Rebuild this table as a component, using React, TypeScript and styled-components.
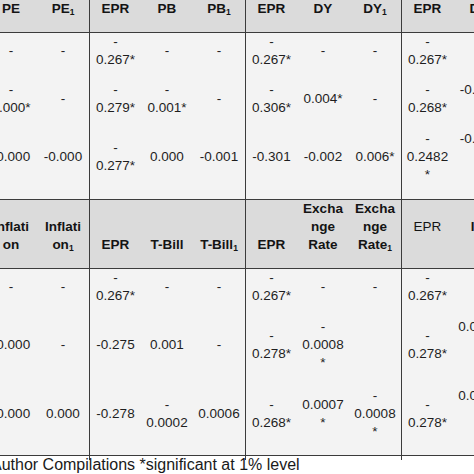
import React from "react";
import styled, { createGlobalStyle } from "styled-components";

const GlobalStyle = createGlobalStyle`
    html, body {
        margin: 0;
        padding: 0;
        background: #ffffff;
    }
    body {
        font-family: "Liberation Sans", Arial, sans-serif;
        color: #1e1e1e;
    }
`;

const RULE = "1px solid #3b3b3b";

const Page = styled.div`
    width: 474px;
    height: 474px;
    overflow: hidden;
`;

const Table = styled.div`
    width: 572px;
    margin-left: -15px;
    font-size: 13.5px;
    line-height: 18px;
`;

const HeadRow = styled.div<{$height: number}>`
    display: grid;
    grid-template-columns: repeat(11, 52px);
    height: ${(p) => p.$height}px;
    box-sizing: border-box;
    background: #dbdbdb;
    border-bottom: ${RULE};
    font-weight: 700;
    color: #141414;
`;

const BodyRow = styled.div<{$height: number; $last?: boolean}>`
    display: grid;
    grid-template-columns: repeat(11, 52px);
    height: ${(p) => p.$height}px;
    box-sizing: border-box;
    background: #f3f3f3;
    border-bottom: ${(p) => (p.$last ? RULE : "none")};
`;

const Cell = styled.div<{$start: boolean; $bottom: boolean; $pad: number; $plain?: boolean}>`
    display: flex;
    flex-direction: column;
    align-items: center;
    justify-content: ${(p) => (p.$bottom ? "flex-end" : "center")};
    box-sizing: border-box;
    padding-bottom: ${(p) => p.$pad}px;
    border-left: ${(p) => (p.$start ? RULE : "none")};
    font-weight: ${(p) => (p.$plain ? 400 : "inherit")};
    text-align: center;
    white-space: nowrap;
`;

const Line = styled.span`
    display: block;
    height: 18px;
`;

const Sub = styled.sub`
    font-size: 8.5px;
    line-height: 0;
    vertical-align: -2px;
`;

const Caption = styled.p`
    margin: 0 0 0 -9px;
    font-size: 16px;
    line-height: 18px;
    white-space: nowrap;
    color: #1a1a1a;
`;

type CellData = string[] | {lines: string[]; plain?: boolean; middle?: boolean};

const GROUP_STARTS = [2, 5, 8];

const head1: CellData[] = [
    ["PE"], ["PE_1"],
    ["EPR"], ["PB"], ["PB_1"],
    ["EPR"], ["DY"], ["DY_1"],
    ["EPR"], ["DP"], ["DP_1"],
];

const body1: {height: number; pad: number; cells: CellData[]}[] = [
    {
        height: 35,
        pad: 0,
        cells: [["-"], ["-"], ["-", "0.267*"], ["-"], ["-"], ["-", "0.267*"], ["-"], ["-"], ["-", "0.267*"], ["-"], ["-"]],
    },
    {
        height: 62,
        pad: 0,
        cells: [["-", "0.000*"], ["-"], ["-", "0.279*"], ["-", "0.001*"], ["-"], ["-", "0.306*"], ["0.004*"], ["-"], ["-", "0.268*"], ["-0.004", "*"], ["-"]],
    },
    {
        height: 70,
        pad: 16,
        cells: [["-0.000"], ["-0.000"], ["-", "0.277*"], ["0.000"], ["-0.001"], ["-0.301"], ["-0.002"], ["0.006*"], ["-", "0.2482", "*"], ["-0.003", "2", "*"], ["0.001"]],
    },
];

const head2: CellData[] = [
    ["Inflati", "on"], ["Inflati", "on_1"],
    ["EPR"], ["T-Bill"], ["T-Bill_1"],
    ["EPR"], ["Excha", "nge", "Rate"], ["Excha", "nge", "Rate_1"],
    {lines: ["EPR"], plain: true, middle: true}, {lines: ["IIP"], middle: true}, {lines: ["IIP_1"], middle: true},
];

const body2: {height: number; pad: number; cells: CellData[]}[] = [
    {
        height: 34,
        pad: 0,
        cells: [["-"], ["-"], ["-", "0.267*"], ["-"], ["-"], ["-", "0.267*"], ["-"], ["-"], ["-", "0.267*"], ["-"], ["-"]],
    },
    {
        height: 84,
        pad: 0,
        cells: [["-0.000"], ["-"], ["-0.275"], ["0.001"], ["-"], ["-", "0.278*"], ["-", "0.0008", "*"], [], ["-", "0.278*"], ["0.0004", "*", ""], ["-"]],
    },
    {
        height: 69,
        pad: 19,
        cells: [["-0.000"], ["0.000"], ["-0.278"], ["-", "0.0002"], ["0.0006"], ["-", "0.268*"], ["0.0007", "*"], ["-", "0.0008", "*"], ["-", "0.278*"], ["0.0005", "*", ""], ["-"]],
    },
];

function Text({value}: {value: string}) {
    const [main, sub] = value.split("_");
    return (
        <Line>
            {main}
            {sub && <Sub>{sub}</Sub>}
        </Line>
    );
}

function renderCells(cells: CellData[], header: boolean, pad: number) {
    return cells.map((c, i) => {
        const data = Array.isArray(c) ? {lines: c} : c;
        const middle = "middle" in data && data.middle;
        const plain = "plain" in data && data.plain;
        return (
            <Cell
                key={i}
                $start={GROUP_STARTS.includes(i)}
                $bottom={header && !middle}
                $pad={pad}
                $plain={plain}
            >
                {data.lines.map((l, j) => (
                    <Text key={j} value={l} />
                ))}
            </Cell>
        );
    });
}

export default function App() {
    return (
        <Page>
            <GlobalStyle />
            <Table>
                <HeadRow $height={33}>{renderCells(head1, true, 15)}</HeadRow>
                {body1.map((r, i) => (
                    <BodyRow key={i} $height={r.height} $last={i === body1.length - 1}>
                        {renderCells(r.cells, false, r.pad)}
                    </BodyRow>
                ))}
                <HeadRow $height={69}>{renderCells(head2, true, 15)}</HeadRow>
                {body2.map((r, i) => (
                    <BodyRow key={i} $height={r.height} $last={i === body2.length - 1}>
                        {renderCells(r.cells, false, r.pad)}
                    </BodyRow>
                ))}
            </Table>
            <Caption>Author Compilations *significant at 1% level</Caption>
        </Page>
    );
}
